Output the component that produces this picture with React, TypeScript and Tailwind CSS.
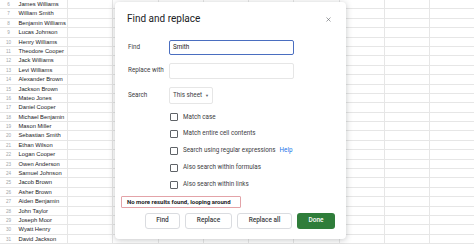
import { X } from 'lucide-react';

const names = [
  'James Williams',
  'William Smith',
  'Benjamin Williams',
  'Lucas Johnson',
  'Henry Williams',
  'Theodore Cooper',
  'Jack Williams',
  'Levi Williams',
  'Alexander Brown',
  'Jackson Brown',
  'Mateo Jones',
  'Daniel Cooper',
  'Michael Benjamin',
  'Mason Miller',
  'Sebastian Smith',
  'Ethan Wilson',
  'Logan Cooper',
  'Owen Anderson',
  'Samuel Johnson',
  'Jacob Brown',
  'Asher Brown',
  'Aiden Benjamin',
  'John Taylor',
  'Joseph Moor',
  'Wyatt Henry',
  'David Jackson',
];

const options = [
  'Match case',
  'Match entire cell contents',
  'Search using regular expressions',
  'Also search within formulas',
  'Also search within links',
];

function Sheet() {
  return (
    <div className="flex flex-col font-['Liberation_Sans',Arial,sans-serif]">
      {names.map((name, i) => (
        <div key={name} className="flex h-[9.4px] shrink-0 border-b border-[#e6e6e6]">
          <div className="w-[17px] shrink-0 text-center text-[4.6px] leading-[9px] text-[#a0a4a8]">{i + 6}</div>
          <div className="w-[51px] shrink-0 border-r border-[#e6e6e6] pl-[1.5px] text-[5.8px] leading-[9px] text-[#202124] whitespace-nowrap overflow-hidden">
            {name}
          </div>
          {Array.from({ length: 9 }).map((_, c) => (
            <div key={c} className="w-[45.3px] shrink-0 border-r border-[#e6e6e6]" />
          ))}
        </div>
      ))}
    </div>
  );
}

function Checkbox({ label, help }: { label: string; help?: boolean }) {
  return (
    <div className="flex h-[16.8px] items-center">
      <div className="h-[8px] w-[8px] rounded-[1px] border border-[#5f6368]" />
      <span className="ml-[5px] text-[6.3px] text-[#3c4043]">{label}</span>
      {help && <span className="ml-[4px] text-[6.3px] text-[#1a73e8]">Help</span>}
    </div>
  );
}

function Dialog() {
  return (
    <div className="absolute left-[115px] top-[2px] flex h-[237px] w-[231px] flex-col rounded-[4px] bg-white font-['Roboto',sans-serif] shadow-[0_1px_6px_rgba(60,64,67,0.3)]">
      <div className="flex items-center justify-between pl-[12px] pr-[14px] pt-[10px]">
        <span className="text-[10px] leading-[14px] text-[#202124]">Find and replace</span>
        <X className="h-[7px] w-[7px] text-[#5f6368]" strokeWidth={2} />
      </div>

      <div className="mt-[14px] flex flex-col gap-[8px] pl-[13px]">
        <div className="flex items-center">
          <span className="w-[41px] text-[6.3px] text-[#3c4043]">Find</span>
          <div className="flex h-[15px] w-[125px] items-center rounded-[2px] border border-[#4a6ec0] px-[3px] text-[6.3px] text-[#202124]">
            Smith
          </div>
        </div>
        <div className="flex items-center">
          <span className="w-[41px] text-[6.3px] text-[#3c4043]">Replace with</span>
          <div className="h-[16px] w-[125px] rounded-[2px] border border-[#e6e6e6]" />
        </div>
        <div className="flex items-center">
          <span className="w-[41px] text-[6.3px] text-[#3c4043]">Search</span>
          <div className="flex h-[17px] w-[44px] items-center justify-center gap-[3px] rounded-[2px] border border-[#e6e6e6] text-[6.3px] text-[#3c4043]">
            This sheet
            <span className="text-[4px] text-[#5f6368]">▼</span>
          </div>
        </div>
      </div>

      <div className="mt-[5px] flex flex-col pl-[55px]">
        {options.map((o, i) => (
          <Checkbox key={o} label={o} help={i === 2} />
        ))}
      </div>

      <div className="ml-[6px] mt-[3px] flex h-[12px] w-[120px] items-center rounded-[1px] border border-[#e3a3a8] pl-[5px] text-[6px] font-bold text-[#202124] whitespace-nowrap">
        No more results found, looping around
      </div>

      <div className="mt-[5px] flex justify-end gap-[5px] pr-[11px] text-[6.5px] font-medium">
        <button className="h-[16px] w-[35px] rounded-[3px] border border-[#dadce0] text-[#3c4043]">Find</button>
        <button className="h-[16px] w-[47px] rounded-[3px] border border-[#dadce0] text-[#3c4043]">Replace</button>
        <button className="h-[16px] w-[55px] rounded-[3px] border border-[#dadce0] text-[#3c4043]">Replace all</button>
        <button className="h-[16px] w-[38px] rounded-[3px] bg-[#2f7d3a] text-white">Done</button>
      </div>
    </div>
  );
}

export default function App() {
  return (
    <div className="relative h-[244px] w-[474px] overflow-hidden bg-white">
      <Sheet />
      <Dialog />
    </div>
  );
}
